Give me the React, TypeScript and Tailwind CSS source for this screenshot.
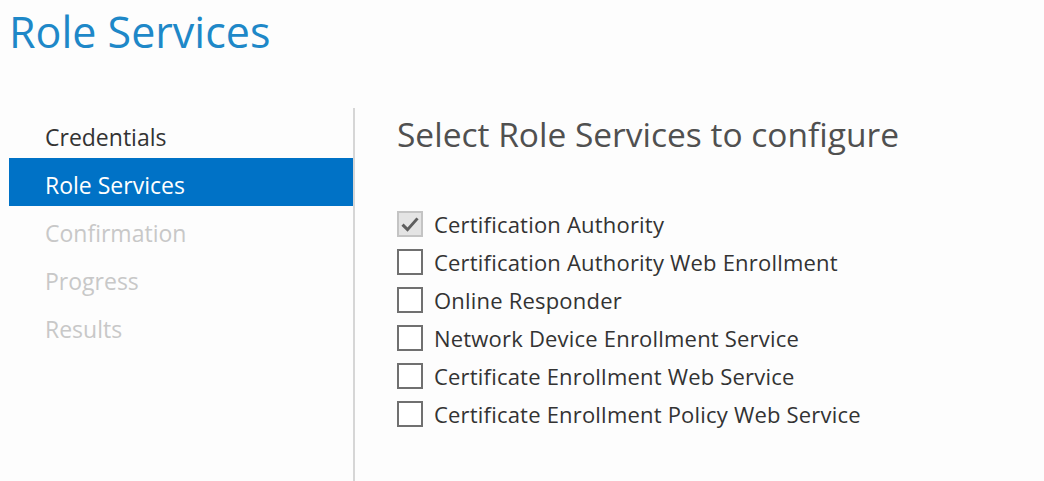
const steps = [
  { label: "Credentials", state: "done" },
  { label: "Role Services", state: "active" },
  { label: "Confirmation", state: "disabled" },
  { label: "Progress", state: "disabled" },
  { label: "Results", state: "disabled" },
];

const services = [
  { label: "Certification Authority", checked: true, locked: true },
  { label: "Certification Authority Web Enrollment", checked: false },
  { label: "Online Responder", checked: false },
  { label: "Network Device Enrollment Service", checked: false },
  { label: "Certificate Enrollment Web Service", checked: false },
  { label: "Certificate Enrollment Policy Web Service", checked: false },
];

function CheckBox({ checked, locked }: { checked: boolean; locked?: boolean }) {
  if (locked) {
    return (
      <span className="flex h-[26px] w-[26px] shrink-0 items-center justify-center border-2 border-[#c4c4c4] bg-[#e4e4e4]">
        <svg viewBox="0 0 16 16" className="h-[20px] w-[20px]">
          <path d="M2 8.5 L6 12.5 L14 3.5" fill="none" stroke="#5e5e5e" strokeWidth="2.4" />
        </svg>
      </span>
    );
  }
  return (
    <span className="flex h-[26px] w-[26px] shrink-0 items-center justify-center border-2 border-[#707070] bg-white">
      {checked && (
        <svg viewBox="0 0 16 16" className="h-[20px] w-[20px]">
          <path d="M2 8.5 L6 12.5 L14 3.5" fill="none" stroke="#333" strokeWidth="2.4" />
        </svg>
      )}
    </span>
  );
}

export default function App() {
  return (
    <div className="h-[481px] w-[1044px] overflow-hidden bg-[#fdfdfd] font-['Open_Sans',sans-serif]">
      {/* Page title */}
      <h1 className="pl-[9px] pt-[6px] text-[43px] leading-[52px] font-normal text-[#1e88c8]">
        Role Services
      </h1>

      <div className="mt-[50px] flex h-[373px]">
        {/* Wizard steps */}
        <nav className="w-[353px] pt-[2px]">
          {steps.map((s) => (
            <div
              key={s.label}
              className={
                s.state === "active"
                  ? "ml-[9px] flex h-[48px] items-center bg-[#0072c6] pl-[36px] pt-[6px] text-[23px] text-white"
                  : s.state === "done"
                    ? "ml-[9px] flex h-[48px] items-center pl-[36px] pt-[6px] text-[23px] text-[#333333]"
                    : "ml-[9px] flex h-[48px] items-center pl-[36px] pt-[6px] text-[23px] text-[#c8c8c8]"
              }
            >
              {s.label}
            </div>
          ))}
        </nav>

        {/* Divider */}
        <div className="w-[2px] bg-[#d6d6d6]" />

        {/* Content */}
        <main className="pl-[42px]">
          <h2 className="pt-[6px] text-[33.5px] leading-[40px] font-normal text-[#505050]">
            Select Role Services to configure
          </h2>
          <ul className="mt-[51px] flex flex-col">
            {services.map((s) => (
              <li key={s.label} className="flex h-[38px] items-center gap-[11px] text-[22px] tracking-[0.2px] text-[#333333]">
                <CheckBox checked={s.checked} locked={s.locked} />
                <span>{s.label}</span>
              </li>
            ))}
          </ul>
        </main>
      </div>
    </div>
  );
}
